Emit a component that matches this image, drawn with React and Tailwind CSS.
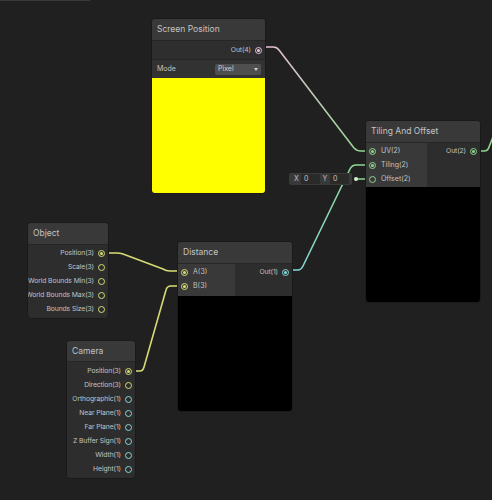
import React from "react";

const PORT = {
  v1: "#84d7da",
  v2: "#8fd68b",
  v3: "#d6dc72",
  v4: "#e7c3df",
};

const Port = ({ type, filled }) => (
  <span
    className="flex h-[7px] w-[7px] shrink-0 items-center justify-center rounded-full border"
    style={{ borderColor: PORT[type] }}
  >
    {filled && <span className="h-[3px] w-[3px] rounded-full" style={{ background: PORT[type] }} />}
  </span>
);

const Header = ({ title, h = "h-[22px]" }) => (
  <div className={`${h} flex items-center whitespace-nowrap border-b border-[#262626] bg-[#393939] px-[5px] text-[8.5px] text-[#c4c4c4]`}>
    {title}
  </div>
);

const OutRow = ({ label, type, filled }) => (
  <div className="flex h-[14px] items-center justify-end gap-[4px] whitespace-nowrap pr-[3px] text-[6.8px] tracking-[-0.1px] text-[#c2c2c2]">
    <span>{label}</span>
    <Port type={type} filled={filled} />
  </div>
);

const InRow = ({ label, type, filled }) => (
  <div className="flex h-[14px] items-center gap-[5px] whitespace-nowrap pl-[3px] text-[7px] text-[#c2c2c2]">
    <Port type={type} filled={filled} />
    <span>{label}</span>
  </div>
);

const Wires = () => (
  <svg className="absolute left-0 top-0" width="492" height="500" fill="none">
    <defs>
      <linearGradient id="pg" gradientUnits="userSpaceOnUse" x1="262" y1="47" x2="370" y2="151">
        <stop offset="0" stopColor="#e9bcd9" />
        <stop offset="1" stopColor="#8fd68b" />
      </linearGradient>
      <linearGradient id="cg" gradientUnits="userSpaceOnUse" x1="288" y1="270" x2="370" y2="165">
        <stop offset="0" stopColor="#84d7da" />
        <stop offset="1" stopColor="#8fd68b" />
      </linearGradient>
    </defs>
    <g strokeWidth="1.6" strokeLinecap="round" strokeLinejoin="round">
      <path d="M261 47 L273 47 Q277 47 279 50 L354 148 Q357 151 361 151 L371 151" stroke="url(#pg)" />
      <path d="M287 270 L298 270 Q301 270 303 266 L350 169 Q352 165 356 165 L371 165" stroke="url(#cg)" />
      <path d="M356 179 L371 179" stroke="#8fd68b" />
      <path d="M104 253 L117 253 Q120 253 123 254 L163 269 Q166 271 170 271 L183 271" stroke="#d6dc72" />
      <path d="M129 371 L140 371 Q143 371 144 367 L166 290 Q167 286 171 286 L183 286" stroke="#d6dc72" />
      <path d="M474 151 L484 151 Q488 151 489 147 L493 137" stroke="#8fd68b" />
    </g>
  </svg>
);

export default function App() {
  return (
    <div
      className="relative h-[500px] w-[492px] overflow-hidden bg-[#202020]"
      style={{ fontFamily: "Inter, 'Noto Sans', sans-serif" }}
    >
      <div className="absolute left-0 top-0 h-[1px] w-[90px] bg-[#3a3a3a]" />
      <Wires />

      {/* Screen Position */}
      <div className="absolute left-[151px] top-[18px] w-[115px] overflow-hidden rounded-[4px] border border-[#1a1a1a] bg-[#2e2e2e]">
        <Header title="Screen Position" />
        <div className="py-[2px]">
          <OutRow label="Out(4)" type="v4" filled />
        </div>
        <div className="flex h-[19px] items-center justify-between border-t border-[#262626] bg-[#323232] pl-[5px] pr-[4px] text-[7px] text-[#c2c2c2]">
          <span>Mode</span>
          <div className="flex h-[11px] w-[46px] items-center justify-between rounded-[2px] bg-[#4f4f4f] pl-[3px] pr-[3px] text-[7px] text-[#d0d0d0]">
            <span>Pixel</span>
            <span className="h-0 w-0 border-l-[2.5px] border-r-[2.5px] border-t-[3px] border-l-transparent border-r-transparent border-t-[#d0d0d0]" />
          </div>
        </div>
        <div className="h-[115px] bg-[#ffff00]" />
      </div>

      {/* Tiling And Offset */}
      <div className="absolute left-[365px] top-[120px] w-[116px] overflow-hidden rounded-[4px] border border-[#1a1a1a] bg-[#2d2d2d]">
        <Header title="Tiling And Offset" />
        <div className="flex">
          <div className="w-[61px] bg-[#393939] pb-[1px] pt-[1px]">
            <InRow label="UV(2)" type="v2" filled />
            <InRow label="Tiling(2)" type="v2" filled />
            <InRow label="Offset(2)" type="v2" />
          </div>
          <div className="flex-1 pt-[1px]">
            <OutRow label="Out(2)" type="v2" filled />
          </div>
        </div>
        <div className="h-[115px] bg-black" />
      </div>

      {/* Offset inline field */}
      <div className="absolute left-[289px] top-[173px] flex h-[12px] w-[63px] items-center rounded-[2px] bg-[#393939] px-[3px] text-[7px] text-[#c2c2c2]">
        <span className="w-[9px] text-center">X</span>
        <span className="flex h-[10px] w-[19px] items-center rounded-[1px] bg-[#2a2a2a] pl-[3px]">0</span>
        <span className="w-[10px] text-center">Y</span>
        <span className="flex h-[10px] w-[19px] items-center rounded-[1px] bg-[#2a2a2a] pl-[3px]">0</span>
      </div>
      <div className="absolute left-[354px] top-[177px] h-[4px] w-[4px] rounded-full bg-[#d8ecd6]" />

      {/* Object */}
      <div className="absolute left-[27px] top-[222px] w-[82px] overflow-hidden rounded-[4px] border border-[#1a1a1a] bg-[#2d2d2d]">
        <Header title="Object" />
        <div className="pb-[2px] pt-[1px]">
          <OutRow label="Position(3)" type="v3" filled />
          <OutRow label="Scale(3)" type="v3" />
          <OutRow label="World Bounds Min(3)" type="v3" />
          <OutRow label="World Bounds Max(3)" type="v3" />
          <OutRow label="Bounds Size(3)" type="v3" />
        </div>
      </div>

      {/* Distance */}
      <div className="absolute left-[177px] top-[241px] w-[116px] overflow-hidden rounded-[4px] border border-[#1a1a1a] bg-[#2d2d2d]">
        <Header title="Distance" />
        <div className="flex">
          <div className="w-[57px] bg-[#393939] pb-[3px] pt-[1px]">
            <InRow label="A(3)" type="v3" filled />
            <InRow label="B(3)" type="v3" filled />
          </div>
          <div className="flex-1 pt-[1px]">
            <OutRow label="Out(1)" type="v1" filled />
          </div>
        </div>
        <div className="h-[115px] bg-black" />
      </div>

      {/* Camera */}
      <div className="absolute left-[66px] top-[340px] w-[70px] overflow-hidden rounded-[4px] border border-[#1a1a1a] bg-[#2d2d2d]">
        <Header title="Camera" h="h-[21px]" />
        <div className="pb-[2px] pt-[2px]">
          <OutRow label="Position(3)" type="v3" filled />
          <OutRow label="Direction(3)" type="v3" />
          <OutRow label="Orthographic(1)" type="v1" />
          <OutRow label="Near Plane(1)" type="v1" />
          <OutRow label="Far Plane(1)" type="v1" />
          <OutRow label="Z Buffer Sign(1)" type="v1" />
          <OutRow label="Width(1)" type="v1" />
          <OutRow label="Height(1)" type="v1" />
        </div>
      </div>
    </div>
  );
}
